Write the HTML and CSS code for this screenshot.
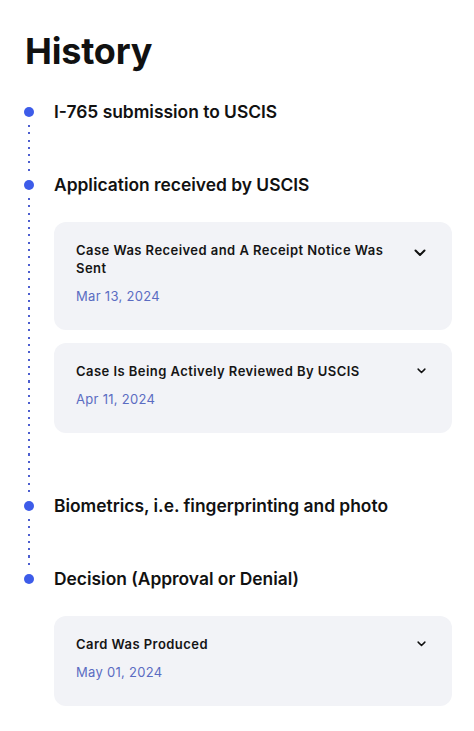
FILE: index.html
```html
<!DOCTYPE html>
<html lang="en">
<head>
  <meta charset="UTF-8">
  <title>History</title>
  <link rel="stylesheet" href="styles.css">
</head>
<body>
  <div class="page">
    <h1 class="page-title">History</h1>

    <div class="timeline">
      <div class="step">
        <div class="rail"><span class="dot"></span><span class="line"></span></div>
        <div class="step-body">
          <h2 class="step-title">I-765 submission to USCIS</h2>
        </div>
      </div>

      <div class="step">
        <div class="rail"><span class="dot"></span><span class="line"></span></div>
        <div class="step-body">
          <h2 class="step-title">Application received by USCIS</h2>
          <div class="cards">
            <div class="card">
              <div class="card-text">
                <div class="card-title">Case Was Received and A Receipt Notice Was Sent</div>
                <div class="card-date">Mar 13, 2024</div>
              </div>
              <svg class="chevron big" viewBox="0 0 12 8"><path d="M1.5 1.5 6 6l4.5-4.5"/></svg>
            </div>
            <div class="card">
              <div class="card-text">
                <div class="card-title">Case Is Being Actively Reviewed By USCIS</div>
                <div class="card-date">Apr 11, 2024</div>
              </div>
              <svg class="chevron" viewBox="0 0 12 8"><path d="M1.5 1.5 6 6l4.5-4.5"/></svg>
            </div>
          </div>
        </div>
      </div>

      <div class="step">
        <div class="rail"><span class="dot"></span><span class="line"></span></div>
        <div class="step-body">
          <h2 class="step-title">Biometrics, i.e. fingerprinting and photo</h2>
        </div>
      </div>

      <div class="step last">
        <div class="rail"><span class="dot"></span></div>
        <div class="step-body">
          <h2 class="step-title">Decision (Approval or Denial)</h2>
          <div class="cards">
            <div class="card">
              <div class="card-text">
                <div class="card-title">Card Was Produced</div>
                <div class="card-date">May 01, 2024</div>
              </div>
              <svg class="chevron" viewBox="0 0 12 8"><path d="M1.5 1.5 6 6l4.5-4.5"/></svg>
            </div>
          </div>
        </div>
      </div>
    </div>
  </div>
</body>
</html>
```

FILE: styles.css
```css
body {
  margin: 0;
  background: #fff;
  color: #111;
  font-family: Inter, 'Noto Sans', sans-serif;
}

.page {
  padding: 29px 22px 0 24px;
}

.page-title {
  margin: 0 0 27px 1px;
  font-size: 36px;
  line-height: 44px;
  font-weight: 700;
  letter-spacing: -0.2px;
}

/* timeline */
.step {
  display: grid;
  grid-template-columns: 10px 1fr;
  column-gap: 20px;
}

.step-body {
  padding-bottom: 49px;
}

.step.last .step-body {
  padding-bottom: 0;
}

.rail {
  display: flex;
  flex-direction: column;
  align-items: center;
}

.dot {
  width: 10px;
  height: 10px;
  margin-top: 7px;
  border-radius: 50%;
  background: #3d5ce9;
}

.line {
  flex: 1;
  width: 2px;
  margin: 8px 0 2px;
  background: repeating-linear-gradient(to bottom, #4d5fcf 0 2px, transparent 2px 7.3px);
}

.step-title {
  margin: 0;
  font-size: 17.4px;
  line-height: 24px;
  font-weight: 600;
}

.cards {
  display: flex;
  flex-direction: column;
  gap: 13px;
  margin-top: 25px;
  margin-bottom: 12px;
}

.step.last .cards {
  margin-bottom: 0;
}

.card {
  display: flex;
  align-items: flex-start;
  gap: 20px;
  padding: 19px 26px 25px 22px;
  background: #f2f3f7;
  border-radius: 12px;
}

.card-text {
  flex: 1;
}

.card-title {
  font-size: 13px;
  line-height: 18px;
  font-weight: 600;
  letter-spacing: 0.45px;
  color: #151515;
}

.card-date {
  margin-top: 10px;
  font-size: 13px;
  line-height: 18px;
  letter-spacing: 0.3px;
  color: #5b6cc2;
}

.chevron {
  width: 9px;
  height: 6px;
  margin-top: 6px;
  fill: none;
  stroke: #111;
  stroke-width: 2;
  stroke-linecap: round;
  stroke-linejoin: round;
}

.chevron.big {
  width: 12px;
  height: 8px;
  margin-top: 8px;
}
```
